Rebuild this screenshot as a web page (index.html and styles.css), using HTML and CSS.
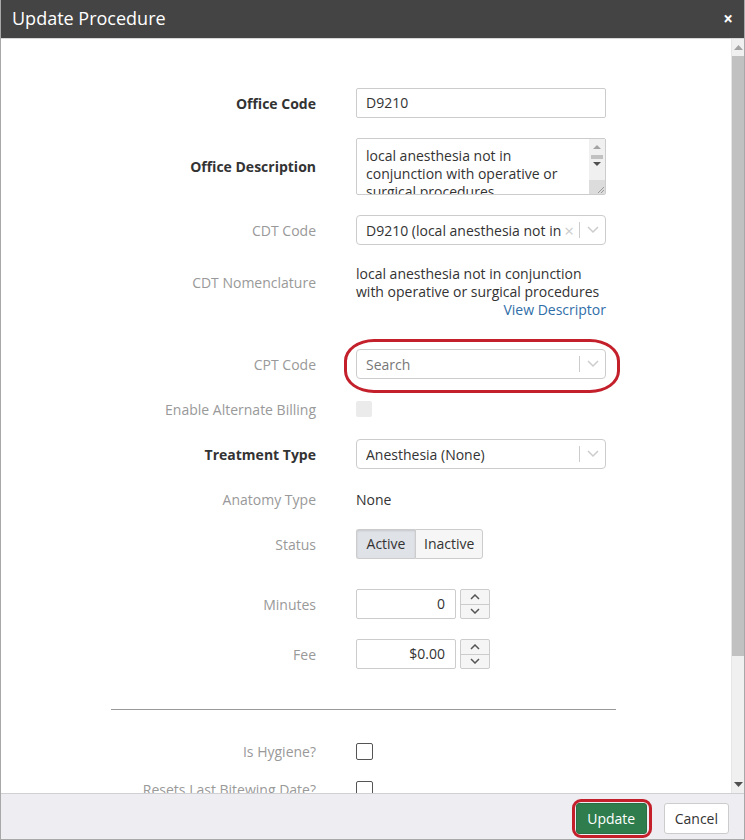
FILE: index.html
```html
<!DOCTYPE html>
<html lang="en">
<head>
    <meta charset="UTF-8">
    <title>Update Procedure</title>
    <link rel="stylesheet" href="styles.css">
</head>
<body>

<div class="modal">
    <div class="modal-header">
        <h2>Update Procedure</h2>
        <span class="close">&times;</span>
    </div>

    <div class="modal-body">
        <div class="form">
            <div class="row">
                <label class="req">Office Code</label>
                <div class="input">D9210</div>
            </div>

            <div class="row">
                <label class="req">Office Description</label>
                <div class="textarea">
                    <div class="textarea-text">local anesthesia not in<br>conjunction with operative or<br>surgical procedures</div>
                    <div class="mini-scroll">
                        <span class="mini-up"></span>
                        <span class="mini-thumb"></span>
                        <span class="mini-down"></span>
                        <span class="mini-grip">
                            <svg width="10" height="10" viewBox="0 0 10 10"><path d="M9 3 L3 9 M9 6 L6 9" stroke="#999" stroke-width="1"/></svg>
                        </span>
                    </div>
                </div>
            </div>

            <div class="row">
                <label>CDT Code</label>
                <div class="select">
                    <span class="select-value">D9210 (local anesthesia not in</span>
                    <span class="select-clear">&times;</span>
                    <span class="select-sep"></span>
                    <span class="select-arrow"><svg width="12" height="8" viewBox="0 0 12 8"><polyline points="1,1 6,6 11,1" fill="none" stroke="#ccc" stroke-width="1.5"/></svg></span>
                </div>
            </div>

            <div class="row wide top">
                <label class="label-top">CDT Nomenclature</label>
                <div class="nomen">
                    <div>local anesthesia not in conjunction<br>with operative or surgical procedures</div>
                    <a class="link">View Descriptor</a>
                </div>
            </div>

            <div class="row tight">
                <label>CPT Code</label>
                <div class="marked">
                    <div class="select">
                        <span class="select-value placeholder">Search</span>
                        <span class="select-sep"></span>
                        <span class="select-arrow"><svg width="12" height="8" viewBox="0 0 12 8"><polyline points="1,1 6,6 11,1" fill="none" stroke="#ccc" stroke-width="1.5"/></svg></span>
                    </div>
                </div>
            </div>

            <div class="row tight">
                <label>Enable Alternate Billing</label>
                <div><span class="checkbox disabled"></span></div>
            </div>

            <div class="row tight">
                <label class="req">Treatment Type</label>
                <div class="select">
                    <span class="select-value">Anesthesia (None)</span>
                    <span class="select-sep"></span>
                    <span class="select-arrow"><svg width="12" height="8" viewBox="0 0 12 8"><polyline points="1,1 6,6 11,1" fill="none" stroke="#ccc" stroke-width="1.5"/></svg></span>
                </div>
            </div>

            <div class="row tight">
                <label>Anatomy Type</label>
                <div class="plain">None</div>
            </div>

            <div class="row wide">
                <label>Status</label>
                <div class="btn-group">
                    <span class="toggle active">Active</span>
                    <span class="toggle">Inactive</span>
                </div>
            </div>

            <div class="row">
                <label>Minutes</label>
                <div class="number">
                    <div class="number-input">0</div>
                    <div class="spin">
                        <span class="spin-btn"><svg width="10" height="6" viewBox="0 0 10 6"><polyline points="1,5 5,1 9,5" fill="none" stroke="#555" stroke-width="1.5"/></svg></span>
                        <span class="spin-btn"><svg width="10" height="6" viewBox="0 0 10 6"><polyline points="1,1 5,5 9,1" fill="none" stroke="#555" stroke-width="1.5"/></svg></span>
                    </div>
                </div>
            </div>

            <div class="row">
                <label>Fee</label>
                <div class="number">
                    <div class="number-input">$0.00</div>
                    <div class="spin">
                        <span class="spin-btn"><svg width="10" height="6" viewBox="0 0 10 6"><polyline points="1,5 5,1 9,5" fill="none" stroke="#555" stroke-width="1.5"/></svg></span>
                        <span class="spin-btn"><svg width="10" height="6" viewBox="0 0 10 6"><polyline points="1,1 5,5 9,1" fill="none" stroke="#555" stroke-width="1.5"/></svg></span>
                    </div>
                </div>
            </div>

            <hr class="divider">

            <div class="row close-row">
                <label>Is Hygiene?</label>
                <div><span class="checkbox"></span></div>
            </div>

            <div class="row">
                <label>Resets Last Bitewing Date?</label>
                <div><span class="checkbox"></span></div>
            </div>
        </div>

        <div class="scrollbar">
            <span class="sb-arrow"><svg width="9" height="5" viewBox="0 0 9 5"><polygon points="0,5 4.5,0 9,5" fill="#a3a3a3"/></svg></span>
            <span class="sb-thumb"></span>
            <span class="sb-track"></span>
            <span class="sb-arrow"><svg width="9" height="5" viewBox="0 0 9 5"><polygon points="0,0 4.5,5 9,0" fill="#505050"/></svg></span>
        </div>
    </div>

    <div class="modal-footer">
        <span class="marked-btn"><button class="btn btn-primary">Update</button></span>
        <button class="btn">Cancel</button>
    </div>
</div>

</body>
</html>
```

FILE: styles.css
```css
body {
    margin: 0;
    font-family: 'Open Sans', sans-serif;
    font-size: 14px;
    color: #333;
    background: #fff;
}

.modal {
    width: 745px;
    height: 840px;
    box-sizing: border-box;
    border: 1px solid #a8a8a8;
    border-top: none;
    display: flex;
    flex-direction: column;
    overflow: hidden;
}

.modal-header {
    height: 38px;
    margin: 0 -1px;
    background-color: #444;
    color: white;
    display: flex;
    align-items: center;
    justify-content: space-between;
    padding: 0 12px 2px 12px;
    box-sizing: border-box;
    flex-shrink: 0;
}

.modal-header h2 {
    margin: 0;
    font-size: 18px;
    font-weight: 400;
}

.close {
    font-size: 17px;
    font-weight: 700;
    line-height: 1;
}

.modal-body {
    flex: 1;
    display: flex;
    min-height: 0;
    border-top: 1px solid #d8d8d8;
}

.form {
    flex: 1;
    padding-top: 49px;
    overflow: hidden;
}

.row {
    display: grid;
    grid-template-columns: 315px 250px;
    column-gap: 40px;
    align-items: center;
    min-height: 30px;
    margin-bottom: 20px;
}

.row.tight {
    margin-bottom: 15px;
}

.row.wide {
    margin-bottom: 30px;
}

.row.close-row {
    margin-bottom: 8px;
}

.row.top {
    align-items: start;
}

label {
    text-align: right;
    color: #999;
}

label.req {
    color: #333;
    font-weight: 700;
}

.label-top {
    padding-top: 8px;
}

.input {
    height: 30px;
    box-sizing: border-box;
    border: 1px solid #ccc;
    border-radius: 2px;
    padding: 0 9px;
    line-height: 28px;
}

.textarea {
    height: 57px;
    box-sizing: border-box;
    border: 1px solid #ccc;
    border-radius: 2px;
    display: flex;
    overflow: hidden;
}

.textarea-text {
    flex: 1;
    padding: 8px 9px;
    line-height: 18px;
    white-space: nowrap;
}

.mini-scroll {
    width: 16px;
    background: #f0f0f0;
    display: flex;
    flex-direction: column;
    align-items: center;
}

.mini-up, .mini-down {
    width: 0;
    height: 0;
    border-left: 4px solid transparent;
    border-right: 4px solid transparent;
    margin-top: 6px;
}

.mini-up {
    border-bottom: 4px solid #a3a3a3;
}

.mini-down {
    border-top: 4px solid #505050;
    margin-top: 3px;
}

.mini-thumb {
    width: 12px;
    height: 4px;
    background: #c1c1c1;
    margin-top: 6px;
}

.mini-grip {
    margin-top: auto;
    width: 16px;
    height: 14px;
    background: #dcdcdc;
    display: flex;
    justify-content: flex-end;
    align-items: flex-end;
}

.select {
    height: 30px;
    box-sizing: border-box;
    border: 1px solid #ccc;
    border-radius: 4px;
    display: flex;
    align-items: center;
    padding-left: 9px;
    background: white;
}

.select-value {
    flex: 1;
    white-space: nowrap;
    overflow: hidden;
    min-width: 0;
}

.placeholder {
    color: #777;
}

.select-clear {
    color: #ccc;
    font-size: 17px;
    padding: 0 5px 0 2px;
}

.select-sep {
    width: 1px;
    height: 16px;
    background: #ccc;
}

.select-arrow {
    width: 25px;
    display: flex;
    justify-content: center;
}

.nomen {
    line-height: 18px;
}

.link {
    display: block;
    text-align: right;
    color: #2f6ea8;
}

.marked {
    position: relative;
}

.marked:after {
    content: "";
    position: absolute;
    left: -12px;
    right: -14px;
    top: -10px;
    bottom: -14px;
    border: 3px solid #c4202b;
    border-radius: 30px / 22px;
}

.checkbox {
    display: block;
    width: 15px;
    height: 15px;
    border: 1px solid #555;
    border-radius: 2px;
    background: white;
}

.checkbox.disabled {
    width: 16px;
    height: 16px;
    border: none;
    background: #ebebeb;
}

.plain {
    color: #333;
}

.btn-group {
    display: flex;
}

.toggle {
    height: 30px;
    box-sizing: border-box;
    border: 1px solid #ccc;
    padding: 0 8px;
    line-height: 28px;
    background: #f6f6f6;
    color: #333;
}

.toggle:first-child {
    border-radius: 3px 0 0 3px;
    border-right: none;
}

.toggle:last-child {
    border-radius: 0 3px 3px 0;
}

.toggle.active {
    background: #dfe2e7;
    box-shadow: inset 0 1px 2px rgba(0, 0, 0, 0.12);
    width: 59px;
    padding: 0;
    text-align: center;
}

.number {
    display: flex;
    align-items: center;
}

.number-input {
    width: 100px;
    height: 30px;
    box-sizing: border-box;
    border: 1px solid #ccc;
    border-radius: 2px;
    padding: 0 10px;
    text-align: right;
    line-height: 28px;
}

.spin {
    margin-left: 4px;
    width: 30px;
    height: 30px;
    box-sizing: border-box;
    border: 1px solid #ccc;
    border-radius: 2px;
    background: #f5f5f5;
    display: flex;
    flex-direction: column;
}

.spin-btn {
    flex: 1;
    display: flex;
    align-items: center;
    justify-content: center;
}

.spin-btn:first-child {
    border-bottom: 1px solid #ccc;
}

.divider {
    border: none;
    border-top: 1px solid #999;
    margin: 40px 0 26px 110px;
    width: 505px;
}

.scrollbar {
    width: 12px;
    background: #f0f0f0;
    display: flex;
    flex-direction: column;
    border-left: 1px solid #e6e6e6;
}

.sb-arrow {
    height: 17px;
    display: flex;
    align-items: center;
    justify-content: center;
}

.sb-thumb {
    height: 600px;
    background: #c1c1c1;
}

.sb-track {
    flex: 1;
}

.modal-footer {
    height: 46px;
    box-sizing: border-box;
    border-top: 1px solid #cfcfd4;
    background: #eeeef2;
    display: flex;
    justify-content: flex-end;
    align-items: flex-start;
    padding: 9px 15px 0 0;
    gap: 17px;
    flex-shrink: 0;
}

.btn {
    font-family: 'Open Sans', sans-serif;
    font-size: 14px;
    height: 31px;
    padding: 0 10px;
    border: 1px solid #ccc;
    border-radius: 3px;
    background: white;
    color: #333;
}

.btn-primary {
    background: #2f7d4d;
    border-color: #2a6f44;
    color: white;
    width: 71px;
}

.marked-btn {
    position: relative;
    display: flex;
}

.marked-btn:after {
    content: "";
    position: absolute;
    left: -4px;
    right: -5px;
    top: -4px;
    bottom: -4px;
    border: 3px solid #c4202b;
    border-radius: 9px;
}
```
